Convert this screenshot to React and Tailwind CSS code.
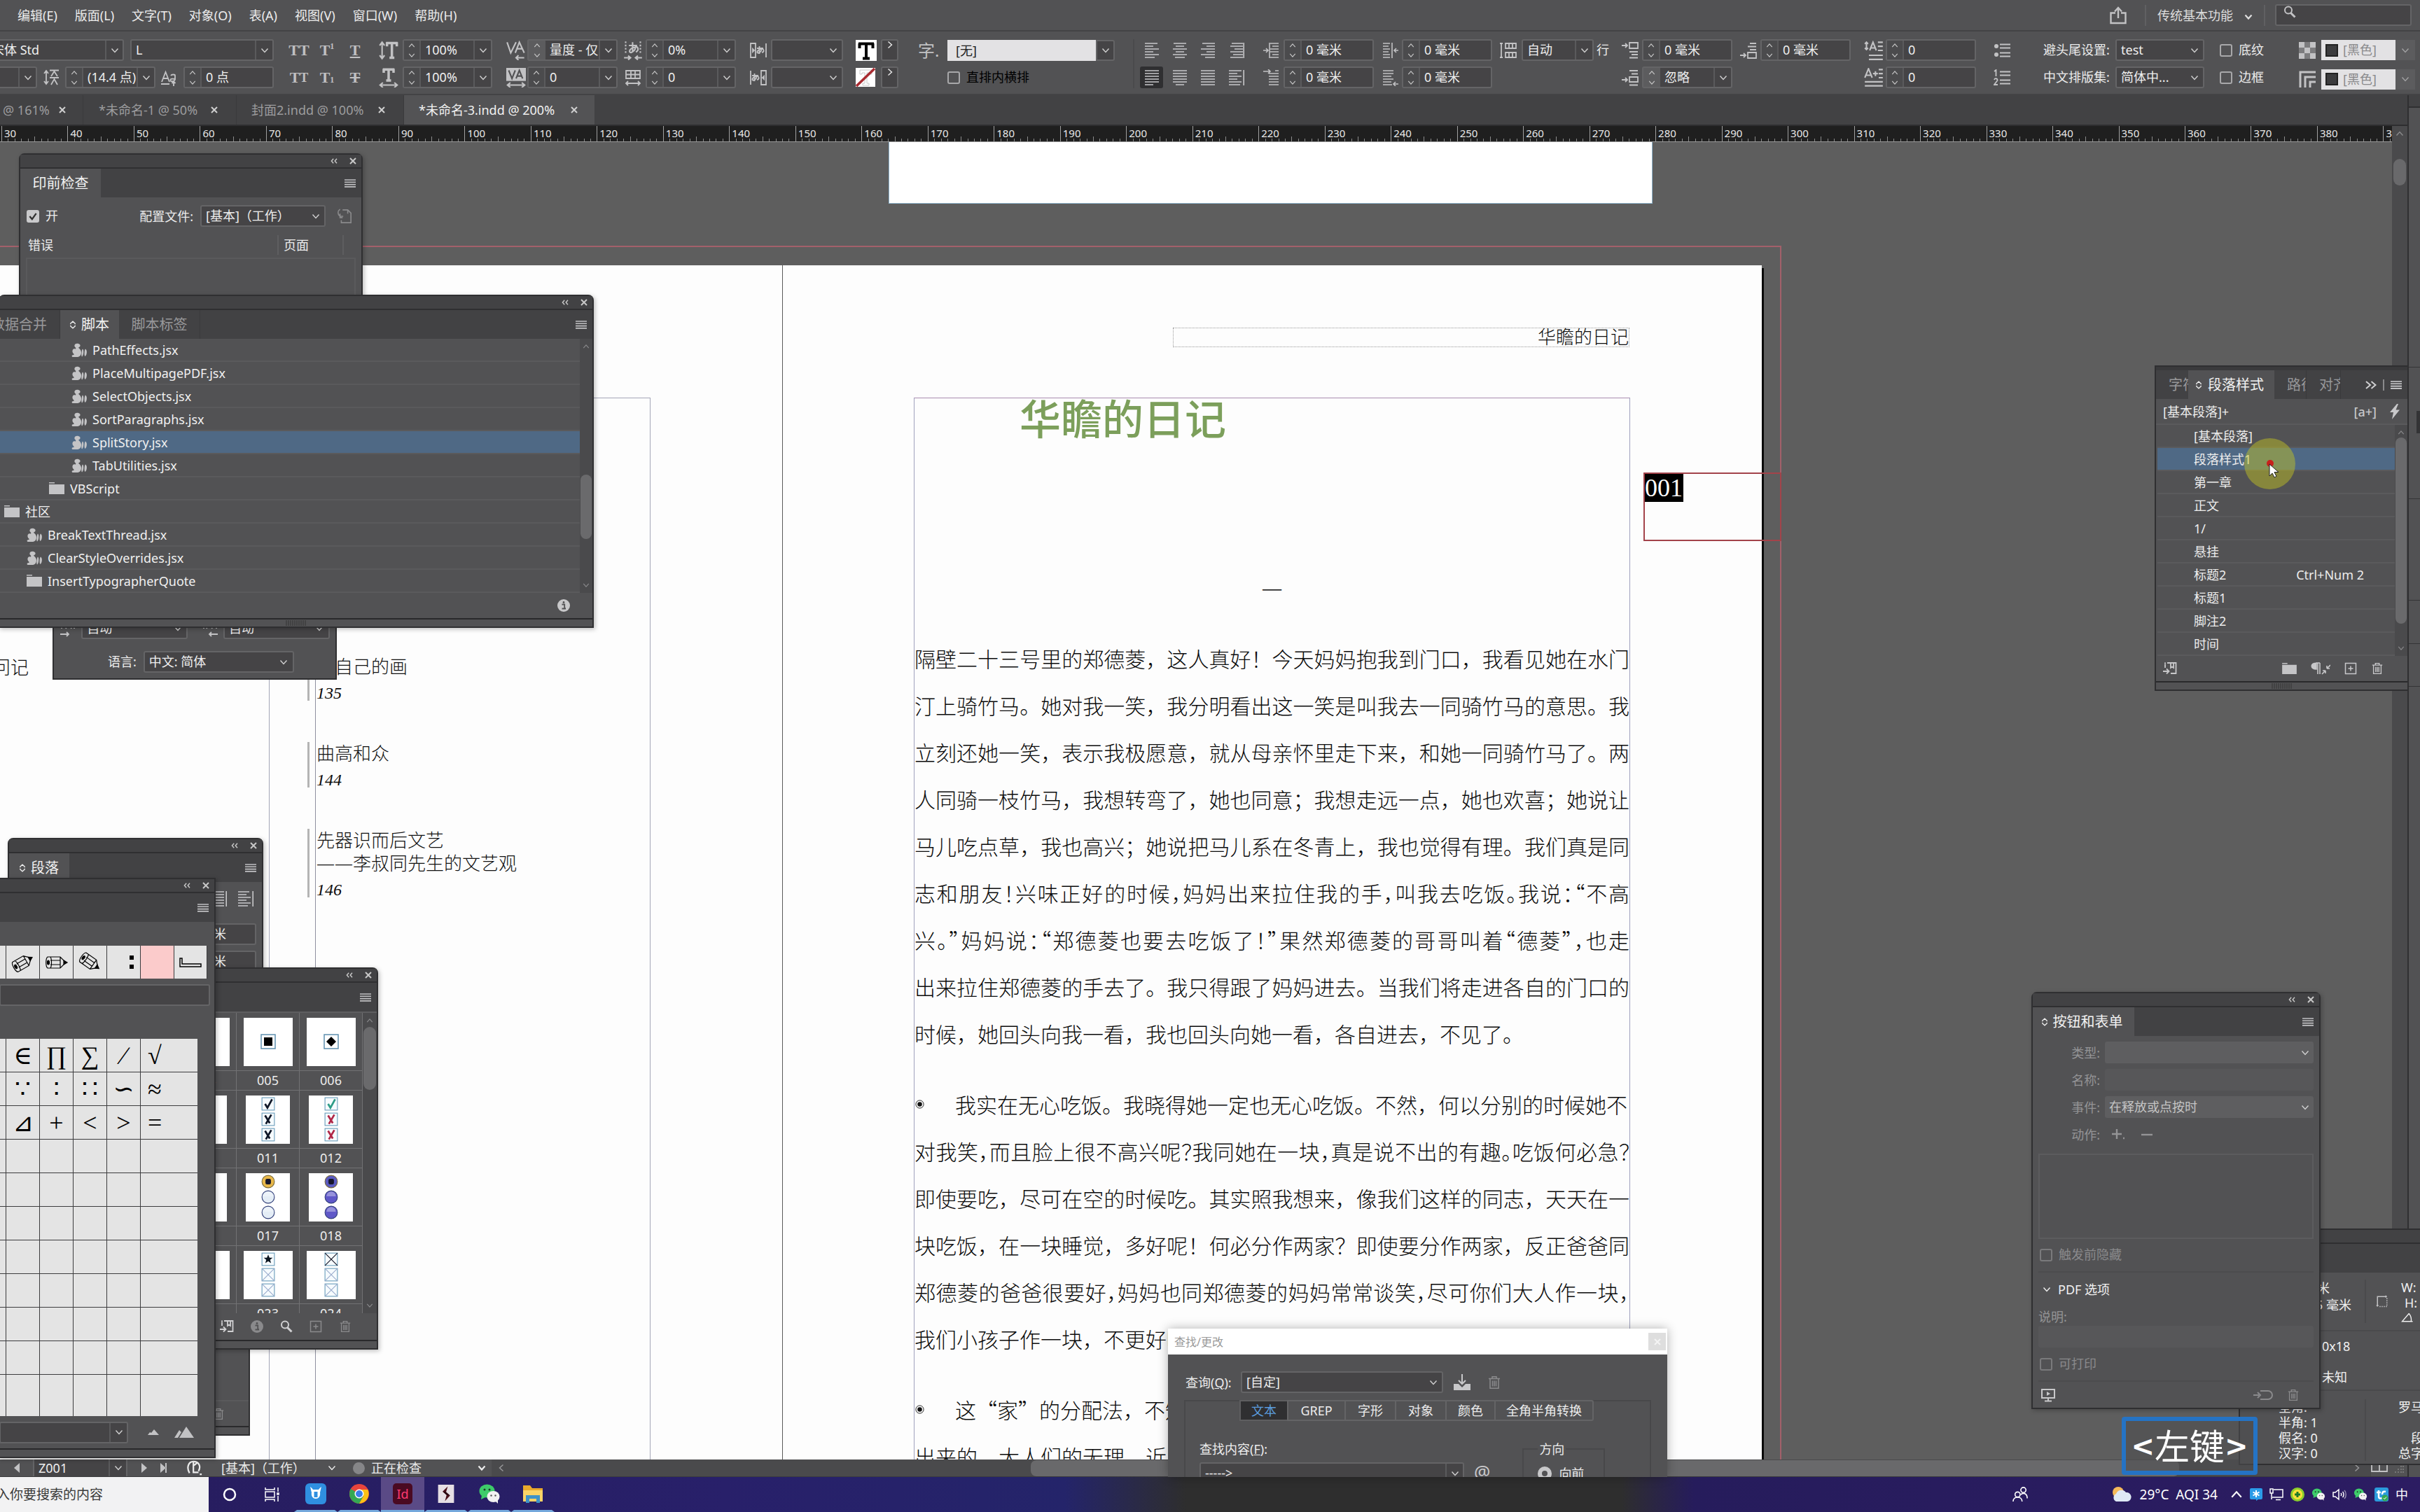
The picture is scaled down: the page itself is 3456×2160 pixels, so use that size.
import React from "react";

/* ---------- icons ---------- */

function Svg({ children, className = "h-6 w-6", box = "0 0 24 24", sw = 1.8 }) {
  return (
    <svg viewBox={box} className={"shrink-0 " + className} fill="none" stroke="currentColor" strokeWidth={sw} aria-hidden="true">
      {children}
    </svg>
  );
}

const Chevron = ({ className = "h-3 w-3" }) => (
  <Svg box="0 0 12 12" className={className} sw={1.4}><path d="M1.5 3.5 6 8.5l4.5-5" /></Svg>
);
const ChevronUp = ({ className = "h-3 w-3" }) => (
  <Svg box="0 0 12 12" className={className} sw={1.4}><path d="M1.5 8.5 6 3.5l4.5 5" /></Svg>
);
const Trash = ({ className = "h-5 w-5" }) => (
  <Svg box="0 0 20 20" className={className} sw={1.5}>
    <path d="M2 4.500h16M7 4V1.800h6V4M4 5v13.200h12V5M7.500 7.500v8M10 7.500v8M12.500 7.500v8" />
  </Svg>
);
const MenuIcon = () => (
  <Svg box="0 0 16 12" className="h-3 w-4" sw={1.6}><path d="M0 1h16M0 4.300h16M0 7.600h16M0 10.900h16" /></Svg>
);
const Updown = () => (
  <Svg box="0 0 10 14" className="h-3 w-2" sw={1.6}><path d="M1 6V4.500L5 1l4 3.500V6M1 8v1.500L5 13l4-3.500V8" /></Svg>
);
const CloseX = ({ className = "h-2.5 w-2.5" }) => (
  <Svg box="0 0 10 10" className={className} sw={2}><path d="M1 1l8 8M9 1 1 9" /></Svg>
);
const DoubleLeft = () => (
  <Svg box="0 0 12 10" className="h-2 w-3" sw={1.8}><path d="M5 1 1.500 5 5 9M11 1 7.500 5 11 9" /></Svg>
);
const InfoIcon = ({ className = "h-[18px] w-[18px]" }) => (
  <svg viewBox="0 0 18 18" className={className} aria-hidden="true">
    <circle cx="9" cy="9" r="9" fill="currentColor" />
    <path d="M6.500 7.500h3.700v5.500h1.500M6.500 13.500h5.500" stroke="#525254" strokeWidth="1.800" fill="none" />
    <circle cx="9" cy="4.500" r="1.400" fill="#525254" />
  </svg>
);
const PlusBox = () => (
  <Svg box="0 0 18 18" className="h-[18px] w-[18px]" sw={1.5}><path d="M1.500 1.500h15v15h-15zM9 5.500v7M5.500 9h7" /></Svg>
);
const ImportIcon = () => (
  <Svg box="0 0 20 20" className="h-5 w-5" sw={1.8}>
    <path d="M3 9V4M6 2h12.500v15H11M11 3v6l2-1.500L15 9V3M2 2.500h2M0 14h8M5 10.500 8.500 14 5 17.500" />
  </Svg>
);
const FolderIcon = ({ className = "h-[17px] w-[22px]" }) => (
  <svg viewBox="0 0 22 17" className={"shrink-0 " + className} fill="#c4c4c6" aria-hidden="true"><path d="M0 0h8v1.500H0zM0 3h22v14H0z" /></svg>
);
const ScriptIcon = () => (
  <svg viewBox="0 0 22 20" className="h-5 w-[22px] shrink-0" fill="#c4c4c6" aria-hidden="true">
    <path d="M5.500 1.500C7 0 11 .5 12.300 2.500c.7 1.500 0 3-1.500 3.500-.8.300-.8 1 0 1.500 2 1.500 3.200 3.500 3.200 6 0 3.500-2 6-5 6.500H1.500C0 19 .5 17.300 2 17.200c1.500 0 2.300-.7 1.300-1.700C1.500 14 .8 11.500 2 9.500c1-1.500 2.800-1.500 4-.8.5-1.200.3-2-.6-2.800C3.800 4.800 4.200 2.800 5.500 1.500z" />
    <path d="M16 8.500c1 .5 1.500 2.500 1.300 5-.2 2.800-1 5.200-2.200 6-.9-.6-.9-2.600-.6-5.200.3-2.500.6-5.200 1.500-5.800zM20 8.500c1.200.5 2 2.500 1.900 4.700-.1 2.500-.9 4.700-2.300 5.800-.9-.7-1.200-2.500-1-5 .2-2.600.5-4.900 1.400-5.500z" />
  </svg>
);
const SearchIcon = ({ className = "h-[18px] w-[18px]" }) => (
  <Svg box="0 0 18 18" className={className} sw={2}><circle cx="7" cy="6.500" r="5" /><path d="m10.500 10.500 6 6" strokeWidth="3" /></Svg>
);
const Grip = () => (
  <svg viewBox="0 0 30 8" className="h-2 w-[30px]" stroke="#333" aria-hidden="true"><path d="M1 0v8M4 0v8M7 0v8M10 0v8M13 0v8M16 0v8M19 0v8M22 0v8M25 0v8M28 0v8" /></svg>
);

function Lines({ rows, align = "l", bar, arrow, className = "h-6 w-6" }) {
  const d = rows
    .map((w, i) => {
      const y = 2 + i * (20 / (rows.length - 1));
      const x = align === "l" ? 2 : align === "r" ? 22 - w : 12 - w / 2;
      return `M${x} ${y}h${w}`;
    })
    .join("");
  return (
    <Svg className={className} sw={1.6}>
      <path d={d} />
      {bar === "r" && <path d="M23.200 1v22" />}
      {bar === "l" && <path d="M9 1v22" />}
      {arrow}
    </Svg>
  );
}

/* ---------- controls ---------- */

const fieldBox = "flex h-[31px] shrink-0 items-stretch rounded-[3px] border-2 border-[#646466] bg-[#454446] text-[#eeeeee] ";

function Spinner({ flat }) {
  return (
    <button type="button" aria-label="步进" className={"flex w-[24px] shrink-0 flex-col items-center justify-center gap-[4px] text-[#c8c8c8] " + (flat ? "bg-[#5c5c5e]" : "border-r-2 border-[#5a5a5c] bg-[#4b4b4d]")}>
      <ChevronUp className="h-[10px] w-3" />
      <Chevron className="h-[10px] w-3" />
    </button>
  );
}

function Combo({ label, value, className, spin, flat, chev }) {
  return (
    <div className={fieldBox + className}>
      {spin && <Spinner flat={flat} />}
      <input aria-label={label} defaultValue={value} className="w-0 min-w-0 flex-1 bg-transparent pl-[6px] text-[18px] leading-[27px] outline-none" />
      {chev && (
        <button type="button" aria-label={label + "选项"} className="flex w-[25px] shrink-0 items-center justify-center border-l-2 border-[#5a5a5c] text-[#d0d0d0]"><Chevron /></button>
      )}
    </div>
  );
}

function Select({ label, id, value, className, split, dim }) {
  return (
    <div className={(dim ? "flex shrink-0 items-stretch rounded-[3px] bg-[#5e5e60] text-[#c4c4c4] " : fieldBox) + className}>
      <select id={id} aria-label={label} className="w-0 min-w-0 flex-1 appearance-none bg-transparent pl-[6px] text-[18px] leading-[27px] outline-none">
        <option>{value}</option>
      </select>
      <span className={"pointer-events-none flex w-[25px] shrink-0 items-center justify-center text-[#d0d0d0] " + (split ? "border-l-2 border-[#5a5a5c]" : "")}><Chevron /></span>
    </div>
  );
}

function Check({ label, className = "", checked, dim }) {
  return (
    <label className={"flex shrink-0 items-center gap-[9px] text-[18px] leading-[31px] whitespace-nowrap " + (dim ? "text-[#8a8a8c] " : "") + className}>
      <span className="grid shrink-0 place-items-center">
        <input type="checkbox" defaultChecked={checked} className={"peer col-start-1 row-start-1 h-[18px] w-[18px] appearance-none rounded-[3px] border-2 checked:border-[#c9c9cb] checked:bg-[#c9c9cb] " + (dim ? "border-[#7a7a7c]" : "border-[#a8a8aa]")} />
        <svg viewBox="0 0 12 12" className="invisible col-start-1 row-start-1 h-[14px] w-[14px] peer-checked:visible" fill="none" stroke="#333" strokeWidth="2" aria-hidden="true"><path d="M2 6l3 3.500L10 2.500" /></svg>
      </span>
      {label}
    </label>
  );
}

const Row = ({ children, className = "" }) => <div className={"flex h-[31px] items-center " + className}>{children}</div>;
const Col = ({ children, className = "" }) => <div className={"flex shrink-0 flex-col gap-[8px] " + className}>{children}</div>;
const IconCell = ({ children, className = "" }) => <div className={"flex h-[31px] items-center justify-center text-[#c2c2c4] " + className}>{children}</div>;

function Glyph({ children, label, className = "" }) {
  return (
    <button type="button" aria-label={label} className={"flex h-[31px] w-[40px] items-center justify-center font-['Liberation_Serif',serif] text-[22px] leading-[26px] font-bold text-[#c0c0c2] " + className}>
      {children}
    </button>
  );
}

/* ---------- menu and control bar ---------- */

function MenuBar() {
  const items = ["编辑(E)", "版面(L)", "文字(T)", "对象(O)", "表(A)", "视图(V)", "窗口(W)", "帮助(H)"];
  return (
    <header className="flex h-[45px] shrink-0 items-center justify-between border-b-2 border-[#434345] pl-[25px]">
      <nav className="flex gap-[25px] text-[18px] leading-[26px] text-[#ececec]">
        {items.map((t) => <button type="button" key={t} className="whitespace-nowrap">{t}</button>)}
      </nav>
      <div className="flex items-center pr-[12px]">
        <button type="button" aria-label="共享" className="mr-[26px] text-[#c2c2c4]">
          <Svg box="0 0 24 26" className="h-[26px] w-6" sw={2.400}><path d="M8 9.500H1.500V24h21V9.500H16M12 17V3M7 7.500 12 2l5 5.500" /></Svg>
        </button>
        <button type="button" className="flex h-[30px] items-center gap-[16px] border-x-2 border-[#606062] px-[16px] text-[18px] leading-[26px] whitespace-nowrap text-[#dedede]">
          传统基本功能
          <Svg box="0 0 12 12" className="mt-1 h-3 w-3" sw={2.200}><path d="M1.500 3.500 6 8.500l4.500-5" /></Svg>
        </button>
        <label className={fieldBox + "ml-[14px] w-[195px] items-center pl-[10px]"}>
          <span className="text-[#c2c2c4]"><SearchIcon /></span>
          <input type="search" aria-label="搜索" className="w-0 min-w-0 flex-1 bg-transparent outline-none" />
        </label>
      </div>
    </header>
  );
}

const AlignBtn = ({ on, children }) => (
  <button type="button" aria-label="对齐" className={"flex h-[31px] w-[33px] items-center justify-center rounded-[3px] text-[#c8c8ca] " + (on ? "bg-[#2f2f31]" : "")}>{children}</button>
);

function ControlBar() {
  const mm = "0 毫米";
  return (
    <section aria-label="控制面板" className="flex h-[91px] shrink-0 items-start overflow-hidden border-b-2 border-[#434345] pt-[11px]">
      <Col className="w-[391px]">
        <Row className="justify-between">
          <Combo label="字体" value="宋体 Std" className="-ml-[20px] w-[197px]" chev />
          <Combo label="字体样式" value="L" className="w-[205px]" chev />
        </Row>
        <Row className="justify-between text-[#c2c2c4]">
          <Combo label="字号" value="" className="-ml-[24px] w-[77px]" chev />
          <Svg className="h-6 w-6"><path d="M5 3v17M2 6l3-4 3 4M2 17l3 4 3-4M10 1.500h13M10 12h13M12 22l4.500-8L21 22M12 10l4.500-7L21 10" /></Svg>
          <Combo label="行距" value="(14.4 点)" className="w-[129px]" spin chev />
          <Svg className="h-6 w-6"><path d="M1 18 6.500 4 12 18M3 13h7M14 9c1-2 6-2 6 0v5c-6-1-7 0-6.500 2 .5 2 5 1.500 6.500-1M0 21h12M18 24v-6M15.500 20l2.500-2.500 2.500 2.500" /></Svg>
          <Combo label="基线偏移" value="0 点" className="w-[129px]" spin />
        </Row>
      </Col>
      <Col className="ml-[16px]">
        <Row><Glyph label="全部大写">TT</Glyph><Glyph label="上标">T<sup className="text-[12px]">1</sup></Glyph><Glyph label="下划线"><span className="underline">T</span></Glyph></Row>
        <Row><Glyph label="小型大写">T<span className="text-[18px]">T</span></Glyph><Glyph label="下标">T<sub className="text-[12px]">1</sub></Glyph><Glyph label="删除线"><span className="line-through">T</span></Glyph></Row>
      </Col>
      <Col className="ml-[12px] w-[32px]">
        <IconCell><Svg className="h-7 w-7"><path d="M4 3v18M1 6l3-4 3 4M1 18l3 4 3-4" /><path d="M9 3h14M10 2v5M22 2v5M16 3v18M13 21h6" strokeWidth="3" /></Svg></IconCell>
        <IconCell><Svg className="h-7 w-7"><path d="M2 21h20M5 18l-3.500 3L5 24M19 18l3.500 3-3.500 3" /><path d="M5 2h14M6 1v5M18 1v5M12 2v14M9 15.500h6" strokeWidth="3" /></Svg></IconCell>
      </Col>
      <Col className="ml-[4px]">
        <Combo label="垂直缩放" value="100%" className="w-[128px]" spin chev />
        <Combo label="水平缩放" value="100%" className="w-[128px]" spin chev />
      </Col>
      <Col className="ml-[18px] w-[32px]">
        <IconCell><Svg className="h-7 w-7"><path d="M1 2l4.500 13L12 2M11 15l5-13 6 13M13 10h7M12 21h10M15 18l-3 3 3 3" /></Svg></IconCell>
        <IconCell><Svg className="h-7 w-7"><path d="M0 0h24v16H0z" fill="currentColor" stroke="none" /><path d="M3 3l4 10 4-10M12 13l4-10 4 10M13.500 10h5" stroke="#525254" /><path d="M2 21h20M5 18l-3.500 3L5 24M19 18l3.500 3-3.500 3" /></Svg></IconCell>
      </Col>
      <Col>
        <Combo label="字偶间距" value="量度 - 仅" className="w-[129px]" spin flat chev />
        <Combo label="字符间距" value="0" className="w-[129px]" spin chev />
      </Col>
      <Col className="ml-[8px] w-[28px]">
        <IconCell><Svg className="h-7 w-7"><path d="M3 1v16M21 1v16" strokeDasharray="2 2" /><path d="M7 6h10M11.500 2v11M16 8c-5 0-9 3-8 6 2 2 7-2 7.500-7 3 1 4 5 0 7M1 21h8M6 18.500 9 21l-3 2.500M23 21h-8M18 18.500 15 21l3 2.500" /></Svg></IconCell>
        <IconCell><Svg className="h-6 w-6"><path d="M2 2h20v11H2zM9 2v11M15 2v11M2 7.500h20M2 20h20M5 17l-3 3 3 3M19 17l3 3-3 3" /></Svg></IconCell>
      </Col>
      <Col className="ml-[4px]">
        <Combo label="比例间距" value="0%" className="w-[129px]" spin chev />
        <Combo label="网格指定格数" value="0" className="w-[129px]" spin chev />
      </Col>
      <Col className="ml-[18px] w-[28px]">
        <IconCell><Svg className="h-6 w-6"><path d="M1 2h7v20H1zM4 10v4l2-2zM23 2v20M10 9h9M13.500 6v11M18 10c-4 0-8 2-7.500 5 2 2 6-1 6.500-6 3 1 4 5 0 6" /></Svg></IconCell>
        <IconCell><Svg className="h-6 w-6"><path d="M16 2h7v20h-7zM20 10v4l-2-2zM1 2v20M3 9h9M6.500 6v11M11 10c-4 0-8 2-7.500 5 2 2 6-1 6.500-6 3 1 4 5 0 6" /></Svg></IconCell>
      </Col>
      <Col className="ml-[4px]">
        <Select label="标点挤压前" value="" className="w-[103px]" />
        <Select label="标点挤压后" value="" className="w-[103px]" />
      </Col>
      <Col className="ml-[18px]">
        <Row className="gap-[6px]">
          <button type="button" aria-label="填色" className="h-[30px] w-[30px] bg-white text-black"><Svg box="0 0 30 30" className="h-[30px] w-[30px]" sw={4}><path d="M4 5.500h22M5.500 5v7M24.500 5v7M15 5v21M10 26.500h10" /></Svg></button>
          <button type="button" aria-label="填色选项" className={fieldBox + "w-[25px] items-center justify-center"}><Chevron className="h-3 w-3 -rotate-90" /></button>
        </Row>
        <Row className="gap-[6px]">
          <button type="button" aria-label="描边" className="h-[30px] w-[30px] text-[#c8c8c8]"><svg viewBox="0 0 30 30" className="h-[30px] w-[30px]" aria-hidden="true"><path d="M0 1h28v27H0z" fill="#fff" /><path d="M6 4h17v6h-3V8h-4v15h3v3h-9v-3h3V8H9v2H6z" fill="none" stroke="#c8c8c8" /><path d="M1 27 27 2" stroke="#a92a30" strokeWidth="3.500" /></svg></button>
          <button type="button" aria-label="描边选项" className={fieldBox + "w-[25px] items-center justify-center"}><Chevron className="h-3 w-3 -rotate-90" /></button>
        </Row>
      </Col>
      <Col className="ml-[28px] w-[281px]">
        <Row className="justify-between">
          <span className="text-[24px] leading-[31px] text-[#c2c2c4]">字.</span>
          <div className="flex h-[30px] w-[239px]">
            <input aria-label="字符样式" defaultValue="[无]" className="w-0 min-w-0 flex-1 bg-[#e3e2e4] pl-[12px] text-[18px] leading-[28px] text-[#222]" />
            <button type="button" aria-label="字符样式选项" className="flex w-[27px] items-center justify-center rounded-r-[3px] border-2 border-[#646466] bg-[#454446] text-[#d0d0d0]"><Chevron /></button>
          </div>
        </Row>
        <Check label="直排内横排" className="ml-[42px]" />
      </Col>
      <div className="ml-[26px] h-[70px] border-l-2 border-[#4a4a4c]" />
      <Col className="ml-[8px]">
        <Row className="gap-[7px]">
          <AlignBtn><Lines rows={[18, 12, 20, 12, 20, 14]} /></AlignBtn>
          <AlignBtn><Lines rows={[18, 12, 20, 12, 20, 14]} align="c" /></AlignBtn>
          <AlignBtn><Lines rows={[18, 12, 20, 12, 20, 14]} align="r" /></AlignBtn>
          <AlignBtn><Lines rows={[16, 18, 12, 18, 14, 18]} align="r" bar="r" /></AlignBtn>
        </Row>
        <Row className="gap-[7px]">
          <AlignBtn on><Lines rows={[20, 20, 20, 20, 20, 12]} /></AlignBtn>
          <AlignBtn><Lines rows={[20, 20, 20, 20, 20, 12]} align="c" /></AlignBtn>
          <AlignBtn><Lines rows={[20, 20, 20, 20, 20, 20]} /></AlignBtn>
          <AlignBtn><Lines rows={[18, 12, 18, 12, 18, 16]} bar="r" /></AlignBtn>
        </Row>
      </Col>
      <Col className="ml-[20px] w-[30px]">
        <IconCell><Lines rows={[12, 9, 12, 12, 9, 12]} align="r" bar="l" arrow={<path d="M0 12h7M4 9l3 3-3 3" />} /></IconCell>
        <IconCell><Lines rows={[5, 14, 14, 14, 14, 14]} align="r" arrow={<path d="M0 3h10M7 0l3 3-3 3" />} /></IconCell>
      </Col>
      <Col className="ml-[2px]">
        <Combo label="左缩进" value={mm} className="w-[129px]" spin />
        <Combo label="首行左缩进" value={mm} className="w-[129px]" spin />
      </Col>
      <Col className="ml-[8px] w-[30px]">
        <IconCell><Lines rows={[10, 8, 10, 8, 10, 10]} arrow={<path d="M15 1v22M25 12h-7M21 9l-3 3 3 3" />} /></IconCell>
        <IconCell><Lines rows={[15, 15, 12, 15, 12, 13]} arrow={<path d="M25 21h-8M20 18l-3 3 3 3" />} /></IconCell>
      </Col>
      <Col className="ml-[2px]">
        <Combo label="右缩进" value={mm} className="w-[129px]" spin />
        <Combo label="末行右缩进" value={mm} className="w-[129px]" spin />
      </Col>
      <Row className="ml-[8px] gap-[4px] text-[18px] text-[#ececec]">
        <IconCell className="w-[30px]"><Svg className="h-6 w-6"><path d="M2 2v20M0 2h4M0 22h4M8 2h15v7H8zM13 2v7M18 2v7M8 15h15v7H8zM13 15v7M18 15v7" /></Svg></IconCell>
        <Select label="强制行数" value="自动" className="w-[103px]" split />
        <span>行</span>
      </Row>
      <Col className="ml-[15px] w-[30px]">
        <IconCell><Svg className="h-6 w-6"><path d="M0 5h8M5 2l3 3-3 3M11 1h12v8H11zM11 14h12M14 18h9M11 22.500h12" /></Svg></IconCell>
        <IconCell><Svg className="h-6 w-6"><path d="M0 15h8M5 12l3 3-3 3M11 11h12v7H11zM11 2h12M14 6.500h9M11 22.500h12" /></Svg></IconCell>
      </Col>
      <Col className="ml-[2px]">
        <Combo label="段前间距" value={mm} className="w-[129px]" spin />
        <Combo label="段落间距" value="忽略" className="w-[129px]" spin flat chev />
      </Col>
      <IconCell className="ml-[8px] w-[30px]"><Svg className="h-6 w-6"><path d="M0 19h8M5 16l3 3-3 3M11 15h12v8H11zM14 2h9M11 6.500h12M14 11h9" /></Svg></IconCell>
      <Combo label="段后间距" value={mm} className="ml-[2px] w-[129px]" spin />
      <Col className="ml-[18px] w-[30px]">
        <IconCell><Svg className="h-7 w-7"><path d="M3 2v9M1 4l2-2 2 2M1 9l2 2 2-2M7 12l4-10 4 10M8.500 9h5M17 2h6M17 7h6M17 12h6M6 18h17M6 23h17" /></Svg></IconCell>
        <IconCell><Svg className="h-7 w-7"><path d="M1 12 5.500 1 10 12M2.500 9h6M11 7h6M14 4v6M18 2h5M18 7h5M18 12h5M1 17h22M1 22h22" /></Svg></IconCell>
      </Col>
      <Col className="ml-[2px]">
        <Combo label="首字下沉行数" value="0" className="w-[129px]" spin />
        <Combo label="首字下沉字数" value="0" className="w-[129px]" spin />
      </Col>
      <Col className="ml-[22px] w-[30px]">
        <IconCell><Svg className="h-6 w-6"><circle cx="4" cy="6" r="3" fill="currentColor" stroke="none" /><circle cx="4" cy="18" r="3" fill="currentColor" stroke="none" /><path d="M9 3.500h15M9 8.500h15M9 15.500h15M9 20.500h15" /></Svg></IconCell>
        <IconCell><Svg className="h-6 w-6"><path d="M1 3l2.500-2v9M1 15c1-3 5-2 4.500 1L1 22h5M9 3.500h15M9 8.500h15M9 15.500h15M9 20.500h15" /></Svg></IconCell>
      </Col>
      <Col className="ml-[44px] w-[230px]">
        <Row className="justify-between text-[18px] whitespace-nowrap text-[#ececec]"><label htmlFor="kinsoku">避头尾设置:</label><Select id="kinsoku" value="test" className="w-[127px]" /></Row>
        <Row className="justify-between text-[18px] whitespace-nowrap text-[#ececec]"><label htmlFor="mojikumi">中文排版集:</label><Select id="mojikumi" value="简体中..." className="w-[127px]" /></Row>
      </Col>
      <Col className="ml-[22px] text-[#ececec]">
        <Check label="底纹" />
        <Check label="边框" />
      </Col>
      <Col className="ml-auto pr-[7px]">
        <Row className="gap-[8px] text-[#c2c2c4]">
          <svg viewBox="0 0 24 24" className="h-6 w-6" aria-hidden="true"><path d="M0 0h24v24H0z" fill="#c2c2c4" /><path d="M8 0h8v8H8zM0 8h8v8H0zM16 8h8v8h-8zM8 16h8v8H8z" fill="#7c7c7e" /></svg>
          <SwatchField label="底纹颜色" />
        </Row>
        <Row className="gap-[8px] pt-[5px] text-[#c2c2c4]">
          <Svg className="h-6 w-6" sw={3}><path d="M2 24V2h22M9 24V9h15M16 24v-8h8" /></Svg>
          <SwatchField label="边框颜色" />
        </Row>
      </Col>
    </section>
  );
}

function SwatchField({ label }) {
  return (
    <div className="flex h-[29px] w-[134px]">
      <button type="button" aria-label={label} className="flex flex-1 items-center gap-[7px] bg-[#e3e2e4] pl-[6px] text-[18px] text-[#8a8a8c]">
        <span className="h-[18px] w-[18px] border-2 border-[#222] bg-[#3c3c3e]" />[黑色]
      </button>
      <span className="flex w-[28px] items-center justify-center bg-[#5c5c5e] text-[#a0a0a2]"><Chevron /></span>
    </div>
  );
}

/* ---------- document tabs and ruler ---------- */

function DocTabs() {
  const tabs = [
    ["@ 161%", "w-[119px] pl-[4px] pr-[24px]"],
    ["*未命名-1 @ 50%", "w-[219px] pl-[22px] pr-[26px]"],
    ["封面2.indd @ 100%", "w-[239px] pl-[21px] pr-[26px]"],
    ["*未命名-3.indd @ 200%", "w-[272px] pl-[21px] pr-[24px]"],
  ];
  return (
    <div role="tablist" className="flex h-[44px] shrink-0 border-b-2 border-[#2e2e30] bg-[#424244] text-[18px] leading-[26px]">
      {tabs.map(([t, c], i) => (
        <div key={t} className={"flex shrink-0 items-center justify-between whitespace-nowrap " + c + (i === 3 ? " bg-[#535355] text-[#f0f0f0]" : " border-r border-[#3a3a3c] text-[#9c9c9e]")}>
          <button type="button" role="tab" aria-selected={i === 3}>{t}</button>
          <button type="button" aria-label="关闭" className="text-[#d0d0d0]"><CloseX /></button>
        </div>
      ))}
    </div>
  );
}

function Ruler() {
  return (
    <div className="h-[23px] flex-1 overflow-hidden border-b border-[#9a9a9a] bg-[#1f1f1f] pl-[2px]">
      <div className="flex w-[3496px]">
        {Array.from({ length: 37 }, (_, i) => (
          <div key={i} className="h-[22px] flex-1 border-l border-[#a0a0a0]">
            <div className="h-[15px] pl-[3px] text-[15px] leading-[21px] text-[#e8e8e8]">{30 + i * 10}</div>
            <div className="flex h-[7px] items-end">
              {Array.from({ length: 10 }, (_, k) => (
                <div key={k} className={"flex-1 border-[#8a8a8a] " + (k === 0 ? "h-[4px]" : k === 5 ? "h-[7px] border-l" : "h-[4px] border-l")} />
              ))}
            </div>
          </div>
        ))}
      </div>
    </div>
  );
}

/* ---------- document canvas ---------- */

const P1 = [
  "隔壁二十三号里的郑德菱，这人真好！今天妈妈抱我到门口，我看见她在水门",
  "汀上骑竹马。她对我一笑，我分明看出这一笑是叫我去一同骑竹马的意思。我",
  "立刻还她一笑，表示我极愿意，就从母亲怀里走下来，和她一同骑竹马了。两",
  "人同骑一枝竹马，我想转弯了，她也同意；我想走远一点，她也欢喜；她说让",
  "马儿吃点草，我也高兴；她说把马儿系在冬青上，我也觉得有理。我们真是同",
  "志和朋友！兴味正好的时候，妈妈出来拉住我的手，叫我去吃饭。我说：“不高",
  "兴。”妈妈说：“郑德菱也要去吃饭了！”果然郑德菱的哥哥叫着“德菱”，也走",
  "出来拉住郑德菱的手去了。我只得跟了妈妈进去。当我们将走进各自的门口的",
];
const P2 = [
  "对我笑，而且脸上很不高兴呢？我同她在一块，真是说不出的有趣。吃饭何必急？",
  "即使要吃，尽可在空的时候吃。其实照我想来，像我们这样的同志，天天在一",
  "块吃饭，在一块睡觉，多好呢！何必分作两家？即使要分作两家，反正爸爸同",
  "郑德菱的爸爸很要好，妈妈也同郑德菱的妈妈常常谈笑，尽可你们大人作一块，",
];

const FullLine = ({ children, tight }) => (
  <span className={"block whitespace-nowrap [text-align-last:justify] " + (tight ? "[font-feature-settings:'halt']" : "")}>{children}</span>
);

const Bullet = () => (
  <svg viewBox="0 0 14 14" className="mr-[44px] ml-[1px] h-[13px] w-[13px] shrink-0" aria-hidden="true"><circle cx="7" cy="7" r="6" fill="none" stroke="#111" strokeWidth="1" /><circle cx="7" cy="7" r="3.500" fill="#111" /></svg>
);

function TocEntry({ lines, page, className }) {
  return (
    <div className={"absolute left-[439px] border-l-[3px] border-[#b4b4b4] pl-[10px] " + className}>
      {lines.map((l) => <p key={l} className="font-['Noto_Sans','Noto_Sans_CJK_SC',sans-serif] text-[26px] leading-[33px] font-light whitespace-nowrap text-[#111]">{l}</p>)}
      <p className="pt-[10px] font-['Liberation_Serif',serif] text-[24px] leading-[22px] italic">{page}</p>
    </div>
  );
}

function Canvas() {
  return (
    <main className="relative flex-1 overflow-hidden bg-[#5e5e5e] font-['Noto_Sans_CJK_SC','Noto_Sans',sans-serif] text-[#0c0c0c]">
      <div className="absolute top-0 left-[1269px] h-[88px] w-[1091px] border-x border-b border-[#8fb4cc] bg-white" />
      <div className="absolute top-[148px] -bottom-1 -left-1 w-[2548px] border-2 border-[#a3606a]" />
      <div className="absolute top-[176px] bottom-0 left-0 flex w-[2516px] bg-[#fdfdfd] shadow-[3px_4px_0_#0a0a0a]">
        <div className="w-[1118px] border-r border-[#5a5a5a]" />
      </div>

      <div className="absolute top-[365px] -bottom-1 left-[384px] w-[545px] border border-[#a4a6b8]" />
      <div className="absolute top-[365px] -bottom-1 left-[450px] border-l border-[#8e909f]" />
      <p className="absolute top-[732px] -left-[11px] text-[26px] leading-[33px] font-light">问记</p>
      <TocEntry lines={["谈自己的画"]} page="135" className="top-[733px]" />
      <TocEntry lines={["曲高和众"]} page="144" className="top-[857px]" />
      <TocEntry lines={["先器识而后文艺", "——李叔同先生的文艺观"]} page="146" className="top-[981px]" />

      <div className="absolute top-[265px] left-[1675px] h-[28px] w-[652px] border border-dotted border-[#9a9a9a] text-right text-[26px] leading-[22px] font-light">华瞻的日记</div>

      <article className="absolute top-[365px] -bottom-1 left-[1305px] w-[1023px] border border-[#9fa1bd] border-t-[#a98bb0] text-[30px] leading-[67px] font-light">
        <h1 className="pl-[150px] text-[59px] leading-[54px] font-medium text-[#7c9f5b]">华瞻的日记</h1>
        <h2 className="mt-[185px] text-center">一</h2>
        <div className="mt-[32px]">
          {P1.map((t, i) => <FullLine key={t} tight={i === 5 || i === 6}>{t}</FullLine>)}
          <span className="block">时候，她回头向我一看，我也回头向她一看，各自进去，不见了。</span>
        </div>
        <div className="mt-[34px]">
          <div className="flex items-center whitespace-nowrap"><Bullet /><span>我实在无心吃饭。我晓得她一定也无心吃饭。不然，何以分别的时候她不</span></div>
          {P2.map((t, i) => <FullLine key={t} tight={i === 0 || i === 3}>{t}</FullLine>)}
          <span className="block">我们小孩子作一块，不更好吗</span>
        </div>
        <div className="mt-[34px]">
          <div className="flex items-center"><Bullet /><span>这“家”的分配法，不知</span></div>
          <span className="block">出来的，大人们的无理，近</span>
        </div>
      </article>

      <div className="absolute top-[472px] left-[2347px] h-[98px] w-[197px] border-2 border-[#a3434a]">
        <span className="block w-[55px] bg-black font-['Liberation_Serif',serif] text-[36px] leading-[40px] text-white">001</span>
      </div>
    </main>
  );
}

/* ---------- floating panels ---------- */

function Panel({ className, tabs = [], bodyClass = "", children, grip, footerLine = true }) {
  return (
    <section className={"absolute flex flex-col border-2 border-[#2f2f31] bg-[#525254] text-[18px] leading-[26px] text-[#ececec] shadow-[2px_2px_6px_rgba(0,0,0,0.25)] " + className}>
      <div className="flex h-[20px] shrink-0 items-center justify-end gap-[16px] border-b-2 border-[#2f2f31] bg-[#424244] pr-[7px] text-[#c8c8c8]">
        <button type="button" aria-label="折叠"><DoubleLeft /></button>
        <button type="button" aria-label="关闭"><CloseX /></button>
      </div>
      <div className="flex h-[41px] shrink-0 items-stretch bg-[#424244] text-[20px]">
        {tabs.map(([t, on, c]) => (
          <button type="button" key={t} className={"flex shrink-0 items-center gap-[8px] overflow-hidden whitespace-nowrap " + c + (on ? " bg-[#525254] text-[#f2f2f2]" : " border-r border-[#3a3a3c] text-[#98989a]")}>
            {on === "sorted" && <Updown />}
            {t}
          </button>
        ))}
        <button type="button" aria-label="面板菜单" className="ml-auto pr-[8px] text-[#c0c0c2]"><MenuIcon /></button>
      </div>
      <div className={"flex min-h-0 flex-1 flex-col " + bodyClass}>{children}</div>
      {footerLine && (
        <div className="flex h-[12px] shrink-0 items-center justify-center border-t-2 border-[#2a2a2c]">{grip && <Grip />}</div>
      )}
    </section>
  );
}

function VScroll({ thumb, className = "w-[18px]" }) {
  return (
    <div className={"flex shrink-0 flex-col items-center justify-between bg-[#4a4a4c] py-[6px] text-[#8a8a8c] " + className}>
      <ChevronUp className="h-[10px] w-3" />
      <div className="w-full flex-1 px-[1px]"><div className={"w-full rounded-full bg-[#6a6a6c] " + thumb} /></div>
      <Chevron className="h-[10px] w-3" />
    </div>
  );
}

function PreflightPanel() {
  return (
    <Panel className="top-[219px] left-[27px] h-[220px] w-[491px] rounded-t-lg" tabs={[["印前检查", "plain", "w-[115px] justify-center"]]} footerLine={false}>
      <div className="flex items-center px-[9px] pt-[11px]">
        <Check label="开" checked />
        <label htmlFor="profile" className="ml-auto">配置文件:</label>
        <Select id="profile" value="[基本]（工作）" className="mr-[16px] ml-[10px] w-[179px]" />
        <Svg className="mr-[4px] h-[22px] w-[22px] text-[#8a8a8c]"><path d="M9 2h8l5 5v15H7v-4M17 2v6M5 1c-4 3-4 8 0 11h5M5 8v6h4" /></Svg>
      </div>
      <table className="mx-[8px] mt-[12px] text-left">
        <thead><tr className="h-[28px]"><th className="pl-[3px] font-normal">错误</th><th className="w-[93px] border-x-2 border-[#5e5e60] pl-[7px] font-normal">页面</th><th className="w-[18px]" /></tr></thead>
      </table>
      <div className="mx-[8px] mt-[4px] h-[100px] border-2 border-[#5a5a5c]" />
    </Panel>
  );
}

function ScriptsPanel() {
  const rows = [
    ["PathEffects.jsx", 3], ["PlaceMultipagePDF.jsx", 3], ["SelectObjects.jsx", 3], ["SortParagraphs.jsx", 3],
    ["SplitStory.jsx", 3], ["TabUtilities.jsx", 3], ["VBScript", 2, 1], ["社区", 0, 1],
    ["BreakTextThread.jsx", 1], ["ClearStyleOverrides.jsx", 1], ["InsertTypographerQuote", 1, 1],
  ];
  const pad = ["pl-[6px]", "pl-[38px]", "pl-[70px]", "pl-[102px]"];
  return (
    <Panel
      className="top-[421px] -left-[2px] h-[476px] w-[850px] rounded-t-lg" grip
      tabs={[["数据合并", false, "w-[86px] justify-end pr-[18px]"], ["脚本", "sorted", "w-[84px] justify-center"], ["脚本标签", false, "w-[116px] justify-center"]]}
    >
      <div className="flex shrink-0">
        <ul className="flex-1">
          {rows.map(([t, d, f]) => (
            <li key={t} className={"flex h-[33px] items-center gap-[8px] border-b-2 border-[#5a5a5c] text-[#f0f0f0] " + pad[d] + (t === "SplitStory.jsx" ? " bg-[#4f6985]" : "")}>
              {f ? <FolderIcon /> : <ScriptIcon />}{t}
            </li>
          ))}
        </ul>
        <VScroll thumb="mt-[178px] h-[92px]" />
      </div>
      <div className="flex flex-1 items-center justify-end pr-[32px] text-[#c8c8ca]"><InfoIcon /></div>
    </Panel>
  );
}

function CharacterPanel() {
  return (
    <section className="absolute top-[880px] left-[75px] flex h-[91px] w-[406px] flex-col justify-between border-2 border-[#2f2f31] bg-[#525254] pr-[8px] pb-[8px] pl-[8px] text-[18px] text-[#ececec]">
      <div className="flex items-center justify-between text-[#c2c2c4]">
        <Svg className="h-6 w-6"><path d="M3 2v12M21 2v12" strokeDasharray="2 2" /><path d="M9 12l4-9 4 9M1 20h12M10 17l3 3-3 3" /></Svg>
        <Select label="比例前" value="自动" className="w-[152px]" />
        <Svg className="ml-[12px] h-6 w-6"><path d="M3 2v12M21 2v12" strokeDasharray="2 2" /><path d="M7 12l4-9 4 9M23 20H11M14 17l-3 3 3 3" /></Svg>
        <Select label="比例后" value="自动" className="w-[152px]" />
      </div>
      <div className="flex items-center gap-[10px] pl-[69px]">
        <label htmlFor="lang">语言:</label>
        <Select id="lang" value="中文: 简体" className="w-[215px]" />
      </div>
    </section>
  );
}

function ParagraphPanel() {
  return (
    <Panel className="top-[1197px] left-[11px] h-[420px] w-[365px] rounded-t-lg" tabs={[["段落", "sorted", "w-[86px] justify-center"]]} bodyClass="items-end pr-[8px] pt-[12px] gap-[8px]">
      <div className="mb-[15px] flex gap-[14px] pr-[4px] text-[#c8c8ca]">
        <Lines rows={[18, 18, 18, 18, 18, 18]} bar="r" />
        <Lines rows={[16, 12, 18, 12, 18, 14]} bar="r" />
      </div>
      <Combo label="左缩进" value="0 毫米" className="w-[102px]" />
      <Combo label="右缩进" value="0 毫米" className="w-[102px]" />
    </Panel>
  );
}

function Pencil({ className }) {
  return (
    <Svg box="0 0 34 20" className={"h-5 w-[34px] text-black " + className} sw={1.2}>
      <path d="M4 2h18l8 8-8 8H4c-3-2-3-14 0-16zM22 2v16M8 7h14M8 13h14M8 2c2 3 2 13 0 16" />
      <ellipse cx="5" cy="10" rx="1.500" ry="3" fill="currentColor" /><path d="m27 7 5 3-5 3z" fill="currentColor" />
    </Svg>
  );
}

function GlyphsPanel() {
  const cell = "flex h-[47px] items-center justify-center bg-[#e4e4e4]";
  const g = [["", "∈", "∏", "∑", "∕", "√"], ["", "∵", "∶", "∷", "∽", "≈"], ["", "⊿", "+", "<", ">", "="]];
  return (
    <Panel className="top-[1254px] -left-[3px] h-[829px] w-[311px]">
      <div className="mt-[34px] grid w-[297px] grid-cols-[9px_repeat(5,47px)_46px] gap-px bg-[#3c3c3e]">
        <div className={cell} />
        <div className={cell}><Pencil className="-rotate-[30deg]" /></div>
        <div className={cell}><Pencil className="" /></div>
        <div className={cell}><Pencil className="rotate-[35deg]" /></div>
        <div className={cell + " justify-end pr-[9px] text-black"}><svg viewBox="0 0 6 20" className="h-5 w-1.5" aria-hidden="true"><path d="M0 0h6v6H0zM0 13h6v6H0z" /></svg></div>
        <div className="h-[47px] bg-[#fbcbcb]" />
        <div className={cell}><Svg box="0 0 32 14" className="h-3.5 w-8 text-black" sw={1.5}><path d="M1 1v12h30V9H4V1z" /></Svg></div>
      </div>
      <input aria-label="搜索字形" className="mt-[8px] h-[31px] w-[301px] shrink-0 rounded-[3px] border-2 border-[#646466] bg-[#454446]" />
      <div className="mt-[47px] grid w-[283px] grid-cols-[9px_repeat(4,47px)_81px] gap-px bg-[#3c3c3e] font-['Liberation_Serif','DejaVu_Serif',serif] text-[36px] leading-[46px] text-black">
        {Array.from({ length: 10 }, (_, r) =>
          Array.from({ length: 6 }, (_, c) => (
            <button type="button" key={r + "-" + c} aria-label="字形" className={"flex h-[47px] items-center bg-[#e4e4e4] " + (c === 5 ? "pl-[10px]" : "justify-center")}>{g[r] ? g[r][c] : ""}</button>
          ))
        )}
        {Array.from({ length: 6 }, (_, c) => <div key={c} className="h-[59px] bg-[#e4e4e4]" />)}
      </div>
      <div className="flex flex-1 items-center text-[#c2c2c4]">
        <Select label="字形字体" value="" className="w-[184px]" split />
        <svg viewBox="0 0 16 8" className="ml-[28px] h-2 w-4" fill="currentColor" aria-hidden="true"><path d="M0 8 3 4l2 1 4-5 7 8z" /></svg>
        <svg viewBox="0 0 28 16" className="ml-[22px] h-4 w-7" fill="currentColor" aria-hidden="true"><path d="M0 16 7 5l3 3-5 8zM7 16 17 0l11 16z" /></svg>
      </div>
    </Panel>
  );
}

function Mini({ kind, tone }) {
  const box = <rect x="1" y="1" width="16" height="16" fill="#f6fbfe" stroke="#6a9cba" />;
  const shapes = {
    check: <>{box}<path d="M5 9l3 5 6-11" stroke={tone} strokeWidth="2.500" fill="none" /></>,
    cross: <>{box}<path d="M5 4l6 10M13 3 6 15" stroke={tone} strokeWidth="2.500" fill="none" /></>,
    ball: <><circle cx="9" cy="9" r="8" fill={tone} stroke="#33407a" /><path d="M3 8a6 6 0 0 1 12 0z" fill="#fff" opacity=".35" /></>,
    eye: <><circle cx="9" cy="9" r="8" fill={tone} stroke="#7a6a3a" /><rect x="5.500" y="5.500" width="7" height="7" rx="2" fill="#15152a" /></>,
    star: <>{box}<path d="M9 3l1.700 4h4l-3.200 2.600 1.200 4.400L9 11.500 5.300 14l1.200-4.400L3.300 7h4z" fill="#0c1620" /></>,
    x: <>{box}<path d="M1 1l16 16M17 1 1 17" stroke={tone} /></>,
  };
  return <svg viewBox="0 0 18 18" className="h-5 w-5" aria-hidden="true">{shapes[kind]}</svg>;
}

function SamplesPanel() {
  const big = (kind) => (
    <svg viewBox="0 0 22 22" className="h-[22px] w-[22px]" aria-hidden="true"><rect x="1" y="1" width="20" height="20" fill="#fff" stroke="#5d8fae" strokeWidth="1.500" />{kind ? <path d="M11 4l7 7-7 7-7-7z" /> : <path d="M5 5h12v12H5z" />}</svg>
  );
  const trio = (a, b, c) => <>{[a, b, c].map(([k, t], i) => <Mini key={i} kind={k} tone={t} />)}</>;
  const rows = [
    ["w-[70px]", [["004", null], ["005", big(0)], ["006", big(1)]]],
    ["w-[63px]", [["010", null], ["011", trio(["check", "#101828"], ["cross", "#101828"], ["cross", "#101828"])], ["012", trio(["check", "#2c9c86"], ["cross", "#b02848"], ["cross", "#b02848"])]]],
    ["w-[63px]", [["016", null], ["017", trio(["eye", "#e8b84a"], ["ball", "#e4edf6"], ["ball", "#e4edf6"])], ["018", trio(["eye", "#5a5ac0"], ["ball", "#5f58c8"], ["ball", "#5f58c8"])]]],
    ["w-[70px]", [["022", null], ["023", trio(["star"], ["x", "#9ac"], ["x", "#9ac"])], ["024", trio(["x", "#112"], ["x", "#9ac"], ["x", "#9ac"])]]],
  ];
  return (
    <Panel className="top-[1382px] left-[239px] h-[546px] w-[301px] rounded-tr-lg">
      <div className="flex h-[431px] shrink-0 overflow-hidden border-t-2 border-[#5e5e60]">
        <div className="flex-1">
          {rows.map(([w, cells], r) => (
            <div key={r} className="flex justify-end">
              {cells.map(([label, art]) => (
                <button type="button" key={label} className="w-[90px] shrink-0 border-r border-[#727274]">
                  <span className="flex h-[83px] items-center justify-center border-b border-[#727274]">
                    <span className={"flex h-[69px] flex-col items-center justify-evenly bg-white " + w}>{art}</span>
                  </span>
                  <span className="block h-[28px] border-b border-[#727274] text-[18px] leading-[27px]">{label}</span>
                </button>
              ))}
            </div>
          ))}
        </div>
        <VScroll thumb="mt-[4px] h-[90px]" className="w-[20px]" />
      </div>
      <div className="flex flex-1 items-center justify-end gap-[24px] pr-[36px] text-[#8a8a8c]">
        <span className="text-[#d0d0d2]"><ImportIcon /></span><InfoIcon /><span className="text-[#d0d0d2]"><SearchIcon /></span><PlusBox /><Trash className="h-[18px] w-[18px]" />
      </div>
    </Panel>
  );
}

function StylesPanel() {
  const rows = ["[基本段落]", "段落样式1", "第一章", "正文", "1/", "悬挂", "标题2", "标题1", "脚注2", "时间"];
  return (
    <section className="absolute top-[522px] right-[16px] flex h-[465px] w-[363px] flex-col border-2 border-[#2f2f31] bg-[#525254] text-[18px] leading-[26px] text-[#ececec]">
      <div className="h-[5px] shrink-0 bg-[#3a3a3c]" />
      <div className="flex h-[41px] shrink-0 items-stretch bg-[#424244] text-[20px] whitespace-nowrap">
        <button type="button" className="w-[46px] overflow-hidden pl-[18px] text-left text-[#98989a]">字符</button>
        <button type="button" className="flex w-[123px] items-center justify-center gap-[9px] bg-[#525254] pr-[4px] text-[#f2f2f2]"><Updown />段落样式</button>
        <button type="button" className="w-[46px] overflow-hidden border-r border-[#3a3a3c] pl-[18px] text-left text-[#98989a]">路径</button>
        <button type="button" className="w-[49px] overflow-hidden border-r border-[#3a3a3c] pl-[18px] text-left text-[#98989a]">对齐</button>
        <div className="ml-auto flex items-center gap-[9px] pr-[8px] text-[#d0d0d2]">
          <Svg box="0 0 16 12" className="h-3 w-4" sw={2}><path d="M1 1l6 5-6 5M8.500 1l6 5-6 5" /></Svg>
          <span className="h-4 border-l-2 border-[#8a8a8c]" />
          <MenuIcon />
        </div>
      </div>
      <div className="flex h-[37px] shrink-0 items-center gap-[18px] border-b-2 border-[#5a5a5c] px-[10px]">
        <span className="mr-auto">[基本段落]+</span>
        <span className="text-[18px] font-medium text-[#c8c8ca]">[a+]</span>
        <svg viewBox="0 0 16 22" className="h-[22px] w-4" fill="#c8c8ca" aria-hidden="true"><path d="M11 0 1 12h5L4 22 15 8.500H9.500L13 0z" /></svg>
      </div>
      <div className="flex shrink-0">
        <ul className="flex-1 pl-[2px]">
          {rows.map((t, i) => (
            <li key={t} className={"flex h-[33px] items-center justify-between border-b-2 border-[#5a5a5c] pr-[44px] pl-[52px] " + (i === 1 ? "bg-[#4f6985]" : "")}>
              <span>{t}</span>{i === 6 && <span>Ctrl+Num 2</span>}
            </li>
          ))}
        </ul>
        <VScroll thumb="mt-[2px] h-[266px]" />
      </div>
      <div className="flex flex-1 items-center gap-[20px] pr-[34px] pl-[10px] text-[#c8c8ca]">
        <span className="mr-auto"><ImportIcon /></span>
        <FolderIcon className="h-[16px] w-[21px]" />
        <Svg box="0 0 28 18" className="h-[18px] w-7" sw={1.600}><path d="M7 1h6M10 1v16M13 1v16M8 1C-1 1-1 10 8 10z" fill="currentColor" /><path d="M16 17l5-5M21 12h-4M21 12v4M28 4l-5 5M23 9h4M23 9V5" /></Svg>
        <PlusBox />
        <Trash className="h-[18px] w-[18px]" />
      </div>
      <div className="flex h-[12px] shrink-0 items-center justify-center border-t-2 border-[#2a2a2c]"><Grip /></div>
    </section>
  );
}

function InfoPanel() {
  return (
    <section className="absolute top-[1755px] right-0 flex h-[338px] w-[259px] flex-col overflow-hidden border-2 border-r-0 border-[#2f2f31] bg-[#525254] text-[18px] leading-[22px] whitespace-nowrap text-[#f0f0f0]">
      <div className="h-[20px] shrink-0 border-b-2 border-[#2f2f31] bg-[#424244]" />
      <div className="h-[41px] shrink-0 bg-[#424244]" />
      <div className="flex h-[84px] shrink-0 border-b-2 border-[#4a4a4c] py-[10px]">
        <div className="w-[180px] shrink-0 border-r-2 border-[#4a4a4c] pl-[108px] leading-[24px]">
          <p className="pl-[2px]">米</p>
          <p>5 毫米</p>
        </div>
        <div className="flex w-[50px] shrink-0 items-center pl-[14px] text-[#c2c2c4]"><Svg className="h-[18px] w-[18px]" sw={2}><path d="M3 22V3h18M1 20h4M19 1v4" /><path d="M21 6v16H6" strokeDasharray="2 2" /></Svg></div>
        <div className="shrink-0 leading-[22px]"><p>W:</p><p className="pl-[5px]">H:</p><Svg className="h-[18px] w-[18px]"><path d="M22 21H2L15 6M15 6c4 5 5 10 4 15" /></Svg></div>
      </div>
      <div className="h-[85px] shrink-0 border-b-2 border-[#4a4a4c] pt-[10px] pl-[117px]">
        <p>0x18</p>
        <p className="mt-[22px]">未知</p>
      </div>
      <div className="flex pt-[12px]">
        <div className="w-[180px] shrink-0 border-r-2 border-[#4a4a4c] pl-[55px]"><p>全角:</p><p>半角: 1</p><p>假名: 0</p><p>汉字: 0</p></div>
        <div className="flex shrink-0 flex-col pl-[46px]"><p>罗马</p><p className="mt-[22px] pl-[18px]">段</p><p>总字</p></div>
      </div>
    </section>
  );
}

function ButtonsFormsPanel() {
  const label = "w-[88px] shrink-0 text-right text-[#949496]";
  return (
    <Panel className="top-[1417px] right-[142px] h-[596px] w-[413px] rounded-t-lg" tabs={[["按钮和表单", "sorted", "w-[145px] justify-center pr-[4px]"]]} bodyClass="px-[8px]" footerLine={false}>
      <div className="flex h-[39px] items-center gap-[7px] pt-[8px]"><label htmlFor="bt" className={label}>类型:</label><Select id="bt" value="" dim className="h-[31px] flex-1" /></div>
      <div className="flex h-[39px] items-center gap-[7px] pt-[8px]"><label htmlFor="bn" className={label}>名称:</label><input id="bn" className="h-[31px] w-0 flex-1 rounded-[3px] bg-[#575759]" /></div>
      <div className="flex h-[39px] items-center gap-[7px] pt-[8px]"><label htmlFor="be" className={label}>事件:</label><Select id="be" value="在释放或点按时" dim className="h-[31px] flex-1" /></div>
      <div className="flex h-[39px] items-center gap-[7px] pt-[8px] text-[#949496]">
        <span className={label}>动作:</span>
        <button type="button" aria-label="添加动作" className="ml-[9px]"><Svg box="0 0 20 18" className="h-[18px] w-5" sw={2.400}><path d="M8 1v14M1 8h14M17 14h2" /></Svg></button>
        <button type="button" aria-label="删除动作" className="ml-[16px]"><Svg box="0 0 16 16" className="h-4 w-4" sw={2.400}><path d="M0 8h16" /></Svg></button>
      </div>
      <div className="mt-[12px] h-[122px] border-2 border-[#5c5c5e]" />
      <Check label="触发前隐藏" dim className="mt-[7px] pl-[2px]" />
      <div className="mt-[8px] flex h-[50px] items-center gap-[10px] border-t-2 border-[#4c4c4e] pl-[6px] text-[#f0f0f0]"><Chevron />PDF 选项</div>
      <label htmlFor="desc" className="mt-[2px] text-[#949496]">说明:</label>
      <input id="desc" className="h-[31px] rounded-[3px] bg-[#575759]" />
      <Check label="可打印" dim className="mt-[8px] pl-[2px]" />
      <div className="mt-[8px] flex flex-1 items-center border-t-2 border-[#4c4c4e] pr-[20px] pl-[4px] text-[#8a8a8c]">
        <Svg box="0 0 20 20" className="mr-auto h-5 w-5 text-[#c8c8ca]" sw={2}><path d="M1 2h18v12H1zM5 18.500h10M10 14v4" /><path d="m8 5 5 3-5 3z" fill="currentColor" stroke="none" /></Svg>
        <Svg box="0 0 28 16" className="mr-[20px] h-4 w-7" sw={2}><path d="M0 8h8M6 4l4 4-4 4M10 2h11a6 6 0 0 1 0 12H10" /></Svg>
        <Trash className="h-[18px] w-[18px]" />
      </div>
    </Panel>
  );
}

function FindDialog() {
  const tabs = [["文本", "w-[68px]"], ["GREP", "w-[82px]"], ["字形", "w-[72px]"], ["对象", "w-[72px]"], ["颜色", "w-[70px]"], ["全角半角转换", "w-[142px]"]];
  return (
    <section aria-label="查找/更改" className="absolute bottom-[50px] left-[1668px] flex h-[212px] w-[713px] flex-col overflow-hidden bg-[#525254] text-[18px] leading-[26px] text-[#ececec] shadow-[0_0_14px_rgba(0,0,0,0.3)]">
      <div className="flex h-[37px] shrink-0 items-center justify-between bg-white pr-[2px] pl-[9px] text-[16px] text-[#9a9a9a]">
        查找/更改
        <button type="button" aria-label="关闭" className="flex h-[25px] w-[25px] items-center justify-center bg-[#dedede] text-[#f4f4f4]"><CloseX /></button>
      </div>
      <div className="flex shrink-0 items-center pt-[24px] pl-[25px]">
        <label htmlFor="query" className="w-[79px]">查询(<u>Q</u>):</label>
        <Select id="query" value="[自定]" className="w-[289px]" />
        <Svg className="ml-[15px] h-6 w-6 text-[#c8c8ca]" sw={2}><path d="M12 0v13M7 9l5 5 5-5" /><path d="M0 14h7l5 5 5-5h7v9H0z" fill="currentColor" stroke="none" /></Svg>
        <Trash className="ml-[24px] h-6 w-5 text-[#8a8a8c]" />
      </div>
      <div className="mx-[23px] mt-[10px] flex flex-1 flex-col border-2 border-b-0 border-[#48484a]">
        <div role="tablist" className="-mt-[2px] ml-[77px] flex h-[30px] shrink-0">
          {tabs.map(([t, w], i) => (
            <button type="button" role="tab" key={t} className={"border-2 border-r-0 last:rounded-r-[3px] last:border-r-2 leading-[26px] whitespace-nowrap " + w + (i === 0 ? " border-[#5e5e60] bg-[#2f2f31] text-[#5b9bdc]" : " border-[#646466] bg-[#525254]")}>{t}</button>
          ))}
        </div>
        <div className="flex pt-[27px] pl-[20px]">
          <div className="w-[378px] shrink-0">
            <label htmlFor="find">查找内容(<u>F</u>):</label>
            <Combo label="查找内容" value="----->" className="mt-[6px] w-[378px]" chev />
          </div>
          <span className="mt-[28px] ml-[14px] text-[26px] leading-[34px] text-[#c8c8ca]">@</span>
          <fieldset className="ml-[46px] h-[80px] w-[118px] border-2 border-[#48484a] pl-[20px]">
            <legend className="px-[2px]">方向</legend>
            <label className="mt-[9px] flex items-center gap-[10px]"><input type="radio" name="dir" defaultChecked className="h-[20px] w-[20px] shrink-0 appearance-none rounded-full border-[6px] border-[#c8c8ca] bg-[#525254]" />向前</label>
          </fieldset>
        </div>
      </div>
    </section>
  );
}

/* ---------- status bar and task bar ---------- */

function StatusBar() {
  return (
    <footer className="flex h-[25px] shrink-0 items-center overflow-hidden border-b border-[#3c3c3e] bg-[#525254] text-[18px] leading-[25px] whitespace-nowrap text-[#ececec]">
      <svg viewBox="0 0 8 14" className="ml-[20px] h-[14px] w-2" fill="#c2c2c4" aria-hidden="true"><path d="M8 0v14L0 7z" /></svg>
      <Combo label="页码" value="Z001" className="ml-[19px] h-[24px] w-[135px]" chev />
      <svg viewBox="0 0 36 14" className="ml-[20px] h-[14px] w-9" fill="#c2c2c4" aria-hidden="true"><path d="M0 0v14l8-7zM27 0v14l8-7zM34 0h2v14h-2z" /></svg>
      <Svg className="ml-[28px] h-[22px] w-6" sw={2.400}><path d="M4 20C-1 12 2 2 10 2c9 0 12 8 8 15M10 2v17h8M11 8l5-4M20 22h3" /></Svg>
      <button type="button" className="ml-[26px] flex w-[164px] items-center justify-between">[基本]（工作）<Chevron /></button>
      <span className="ml-[24px] h-[17px] w-[17px] rounded-full bg-[#868688]" />
      <span className="ml-[9px]">正在检查</span>
      <span className="ml-[80px]"><Svg box="0 0 12 12" className="h-3 w-3" sw={2.200}><path d="M1.500 3.500 6 8.500l4.500-5" /></Svg></span>
      <div className="ml-[8px] flex h-full flex-1 items-center bg-[#4a4a4c] pl-[8px] text-[#9a9a9c]">
        <Chevron className="h-3 w-3 rotate-90" />
        <div className="ml-[750px] h-[23px] w-[1640px] rounded-lg bg-[#69696b]" />
        <Chevron className="mr-[14px] ml-auto h-3 w-3 -rotate-90" />
      </div>
      <Svg box="0 0 24 14" className="h-[14px] w-6 text-[#c2c2c4]"><path d="M1 0v12h22V0M12 0v12" /></Svg>
      <svg viewBox="0 0 14 14" className="mr-[4px] ml-[10px] h-[14px] w-[14px]" fill="#777" aria-hidden="true"><path d="M11 0h2v2h-2zM8 4h2v2H8zM11 4h2v2h-2zM4 8h2v2H4zM8 8h2v2H8zM11 8h2v2h-2zM0 12h2v2H0zM4 12h2v2H4zM8 12h2v2H8zM11 12h2v2h-2z" /></svg>
    </footer>
  );
}

const WeChat = ({ className = "h-8 w-8" }) => (
  <svg viewBox="0 0 32 32" className={className} aria-hidden="true">
    <ellipse cx="12.500" cy="12" rx="11" ry="9.500" fill="#3ecb6a" /><path d="M5 18l-1 6 6-3z" fill="#3ecb6a" />
    <circle cx="9" cy="10" r="1.500" fill="#1c3a28" /><circle cx="16" cy="10" r="1.500" fill="#1c3a28" />
    <ellipse cx="21.500" cy="20" rx="9" ry="8" fill="#f2f2f2" /><path d="M24 26l4 4 0-6z" fill="#f2f2f2" />
    <circle cx="18.500" cy="18.500" r="1.200" fill="#555" /><circle cx="24.500" cy="18.500" r="1.200" fill="#555" />
  </svg>
);

function TaskBar() {
  const slot = "flex h-full w-[62px] items-center justify-center ";
  const open = "border-b-[3px] border-b-[#74a8dc] ";
  return (
    <footer className="relative flex h-[50px] shrink-0 items-center bg-[linear-gradient(90deg,#271c5c_0%,#28206a_30%,#24246a_44%,#2e2e2e_49%,#2e2e2e_67%,#261c5c_70%,#2c1c62_100%)] text-[20px] leading-[28px] text-white">
      <label className="flex h-[50px] w-[298px] items-center overflow-hidden bg-[#f2f2f3]">
        <input aria-label="搜索" defaultValue="入你要搜索的内容" className="-ml-[5px] w-full bg-transparent text-[19px] text-[#3a3a3a] outline-none" />
      </label>
      <nav aria-label="任务栏" className="flex h-full">
        <button type="button" aria-label="Cortana" className="flex h-full w-[60px] items-center justify-center"><svg viewBox="0 0 20 20" className="h-5 w-5" aria-hidden="true"><circle cx="10" cy="10" r="8" fill="none" stroke="#fff" strokeWidth="2.500" /></svg></button>
        <button type="button" aria-label="任务视图" className={slot}><Svg box="0 0 22 20" className="h-5 w-[22px]" sw={1.500}><path d="M1 0v3h13V0M1 6h13v8H1zM1 20v-3h13v3M19 0v6M19 12v8" /><path d="M18 8h2v2h-2z" /></Svg></button>
        <button type="button" aria-label="文件助手" className={slot + open + "border-x-4 border-x-transparent"}><svg viewBox="0 0 30 30" className="h-[30px] w-[30px]" aria-hidden="true"><rect width="30" height="30" rx="6" fill="#2f8fe0" /><path d="M7 5c1 3 1 5 2 8-2 12 14 12 12 0 1-3 1-5 2-8-2 1-3 3-4 4h-8C10 8 9 6 7 5z" fill="#fff" /><path d="M12.500 12h5v8h-5z" fill="#2f8fe0" /></svg></button>
        <button type="button" aria-label="Chrome" className={slot + open + "border-x-4 border-x-transparent"}>
          <svg viewBox="0 0 28 28" className="h-7 w-7" aria-hidden="true"><circle cx="14" cy="14" r="14" fill="#e8453c" /><path d="M14 14 1.900 7A14 14 0 0 0 14 28l6-10.500z" fill="#34a853" /><path d="M14 28a14 14 0 0 0 12.200-20H14l6 9.500z" fill="#fbc116" /><circle cx="14" cy="14" r="6.500" fill="#fff" /><circle cx="14" cy="14" r="5" fill="#3c7ee8" /></svg>
        </button>
        <button type="button" aria-label="InDesign" className={slot + open + "bg-[#5a4a86]"}><span className="flex h-[30px] w-[28px] items-center justify-center rounded-[5px] bg-[#4a0a22] text-[18px] leading-[26px] text-[#ff3a70]">Id</span></button>
        <button type="button" aria-label="工具" className={slot + open + "border-x-4 border-x-transparent"}><svg viewBox="0 0 28 32" className="h-[26px] w-7" aria-hidden="true"><rect width="28" height="32" fill="#e6dfe4" /><path d="M17 3 8 12l7 6-3 11 9-10-7-6z" fill="#4a0f18" /><path d="M8 12l7 6 6 1-7-6z" fill="#280810" /></svg></button>
        <button type="button" aria-label="微信" className={slot + open + "border-x-4 border-x-transparent"}><WeChat /></button>
        <button type="button" aria-label="文件资源管理器" className={slot + open + "border-x-4 border-x-transparent"}><svg viewBox="0 0 28 26" className="h-[26px] w-7" aria-hidden="true"><path d="M0 1h10l3 4h15v19H0z" fill="#e8a92c" /><path d="M0 8h28v16H0z" fill="#fbd467" /><path d="M4 26V15h20v11h-5v-6h-10v6z" fill="#3f93c8" /></svg></button>
      </nav>
      <div className="ml-auto flex items-center">
        <Svg className="mr-[120px] h-[22px] w-[22px]"><circle cx="8" cy="12" r="4" /><circle cx="17" cy="5" r="4" /><path d="M1 23c0-9 14-9 14 0M13 12c5-4 10-1 10 6" /></Svg>
        <svg viewBox="0 0 28 22" className="h-[22px] w-7" aria-hidden="true"><circle cx="9" cy="8" r="8" fill="#f5b95a" /><path d="M6 21a6 6 0 0 1 0-11 8 8 0 0 1 14-2 6.500 6.500 0 0 1 2 13z" fill="#dfe9f6" /></svg>
        <span className="ml-[12px] text-[19px] whitespace-pre">29°C  AQI 34</span>
        <div className="ml-[18px] flex items-center gap-[10px] pr-[17px]">
          <ChevronUp className="h-[18px] w-[18px]" />
          <svg viewBox="0 0 18 18" className="h-[18px] w-[18px]" aria-hidden="true"><path d="M0 2a2 2 0 0 1 2-2h14a2 2 0 0 1 2 2v12a2 2 0 0 1-2 2h-4l-3 2v-2H2a2 2 0 0 1-2-2z" fill="#2b9be8" /><path d="M9 3v10M4.500 5.500l9 5M13.500 5.500l-9 5" stroke="#fff" strokeWidth="2" /></svg>
          <Svg box="0 0 20 18" className="h-[18px] w-5" sw={1.500}><path d="M6 2h13v11H4M1 1h4v6H1zM3 7v9M9 16.500h7" /></Svg>
          <svg viewBox="0 0 20 20" className="h-5 w-5" aria-hidden="true"><circle cx="10" cy="10" r="10" fill="#8ccf2c" /><circle cx="10" cy="10" r="7" fill="#ffe23a" /><path d="M10 6v8M6 10h8" stroke="#1e7a28" strokeWidth="3" /></svg>
          <WeChat className="h-5 w-5" />
          <Svg box="0 0 20 18" className="h-[18px] w-5" sw={1.500}><path d="M1 6h3l5-4v14l-5-4H1zM12 7c1 1 1 3 0 4M14.500 5c2 2 2 6 0 8" /><path d="M17 3c3 3 3 9 0 12" opacity=".5" /></Svg>
          <WeChat className="h-5 w-5" />
          <svg viewBox="0 0 20 20" className="h-5 w-5" aria-hidden="true"><rect width="20" height="20" rx="3" fill="#2b9bdc" /><path d="M6 4v9c0 3 3 3 5 2M3 7h6M16 6c-4-1-5 1-5 4" stroke="#fff" strokeWidth="2.500" fill="none" /><circle cx="15" cy="15" r="4.500" fill="#33a852" /><path d="M13 15l1.500 1.500L17 13.500" stroke="#fff" fill="none" /></svg>
          <span className="text-[18px]">中</span>
        </div>
      </div>
    </footer>
  );
}

/* ---------- page ---------- */

export default function App() {
  return (
    <div className="relative flex h-screen w-full flex-col overflow-hidden bg-[#525254] font-['Noto_Sans','Noto_Sans_CJK_SC',sans-serif]">
      <MenuBar />
      <ControlBar />
      <div className="flex min-h-0 flex-1">
        <div className="flex min-w-0 flex-1 flex-col">
          <DocTabs />
          <div className="flex min-h-0 flex-1">
            <div className="flex min-w-0 flex-1 flex-col">
              <div className="flex shrink-0"><Ruler /></div>
              <Canvas />
            </div>
            <div className="flex w-[22px] shrink-0 flex-col items-center bg-[#4a4a4c] pt-[5px] text-[#8a8a8c]">
              <ChevronUp />
              <div className="mt-[30px] h-[38px] w-[18px] rounded-full bg-[#69696b]" />
            </div>
          </div>
          <StatusBar />
        </div>
        <aside className="w-[18px] shrink-0 border-l-2 border-[#2f2f31]">
          <div className="h-[18px] border-b-2 border-[#2f2f31] bg-[#424244]" />
          <div className="h-[371px] border-b border-[#343436]" />
          <div className="flex h-[188px] items-start justify-end border-b border-[#343436] pt-[62px]"><div className="h-[32px] w-[5px] bg-[#343436]" /></div>
          <div className="h-[145px] border-b border-[#343436]" />
          <div className="h-[62px] border-b border-[#343436]" />
          <div className="h-[61px] border-b border-[#343436]" />
        </aside>
      </div>
      <TaskBar />

      <CharacterPanel />
      <PreflightPanel />
      <ScriptsPanel />
      <section className="absolute top-[1560px] left-0 flex h-[491px] w-[357px] flex-col justify-end border-r-2 border-b-2 border-[#2f2f31] bg-[#525254] text-[#8a8a8c]">
        <div className="flex h-[37px] items-center justify-end border-t-2 border-[#5a5a5c] pr-[34px]"><Trash className="h-[18px] w-[18px]" /></div>
        <div className="h-[12px] border-t-2 border-[#2a2a2c]" />
      </section>
      <ParagraphPanel />
      <SamplesPanel />
      <GlyphsPanel />
      <StylesPanel />
      <InfoPanel />
      <ButtonsFormsPanel />
      <FindDialog />

      <div className="absolute top-[2024px] right-[232px] flex h-[83px] w-[194px] items-center justify-center rounded-[4px] border-[6px] border-[#2573c4] bg-[#4e4e50]/60 text-[50px] leading-[60px] whitespace-nowrap text-white">
        <b className="font-['DejaVu_Sans',sans-serif] text-[40px] font-bold">&lt;</b>左键<b className="font-['DejaVu_Sans',sans-serif] text-[40px] font-bold">&gt;</b>
      </div>

      <div className="pointer-events-none absolute top-[626px] right-[178px] h-[73px] w-[73px] rounded-full bg-[#c8c81e]/45" />
      <svg viewBox="0 0 24 28" className="pointer-events-none absolute top-[656px] right-[196px] h-7 w-6" aria-hidden="true">
        <circle cx="6" cy="6" r="5" fill="#c8201c" />
        <path d="M5 7v17l4-4 3 6 3-1.500-3-6h6z" fill="#fff" stroke="#222" strokeWidth="1" />
      </svg>
    </div>
  );
}
